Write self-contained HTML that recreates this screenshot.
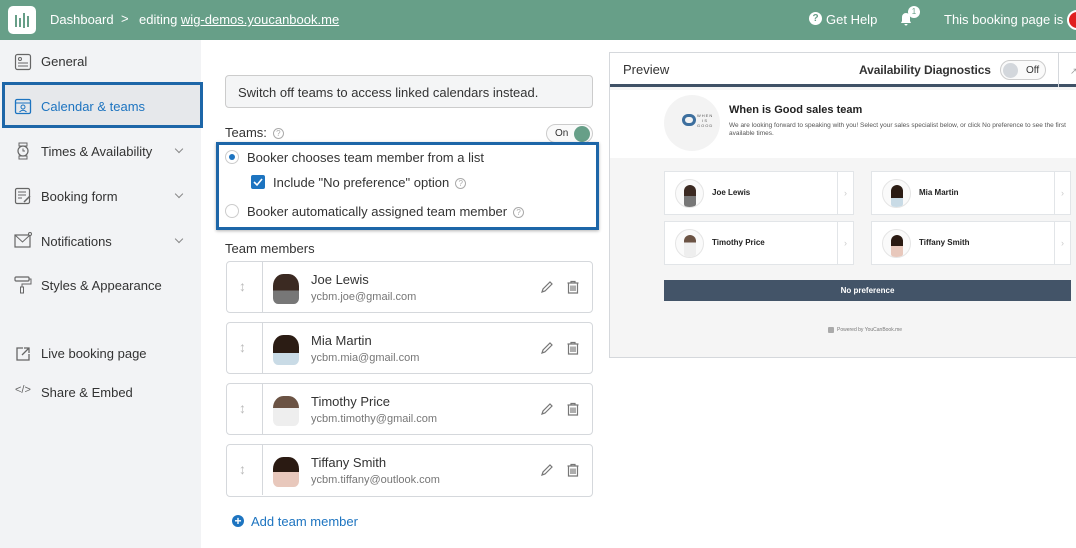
<!DOCTYPE html>
<html><head><meta charset="utf-8"><style>
*{margin:0;padding:0;box-sizing:border-box}
body{width:1076px;height:548px;overflow:hidden;background:#fff;font-family:"Liberation Sans",sans-serif;color:#333;position:relative}
.a{position:absolute}
.hdr{left:0;top:0;width:1076px;height:40px;background:#679f88;color:#fff;font-size:13px}
.side{left:0;top:40px;width:201px;height:508px;background:#f2f3f5}
.si{position:absolute;left:41px;font-size:13px;color:#333}
.ic{position:absolute;left:14px;width:18px;height:18px}
.chev{position:absolute;left:176px;width:6px;height:6px;border-right:1.2px solid #888;border-bottom:1.2px solid #888;transform:rotate(45deg)}
.card{position:absolute;left:226px;width:367px;height:52px;border:1px solid #d5d8dc;border-radius:4px;background:#fff}
.card .dv{position:absolute;left:35px;top:0;width:1px;height:50px;background:#d5d8dc}
.card .nm{position:absolute;left:84px;top:10px;font-size:13px;color:#333}
.card .em{position:absolute;left:84px;top:29px;font-size:11px;color:#777}
.av{position:absolute;left:46px;top:12px;width:26px;height:30px;border-radius:40% 40% 20% 20%}
.pc{position:absolute;border:1px solid #e2e5e8;background:#fff;height:44px}
.pc .circ{position:absolute;left:10px;top:7px;width:29px;height:29px;border-radius:50%;border:1px solid #e5e5e5;background:#fafafa;overflow:hidden}
.pc .circ i{position:absolute;left:8px;top:5px;width:12px;height:22px;border-radius:6px 6px 3px 3px}
.pc .n{position:absolute;left:47px;top:16px;font-size:8px;font-weight:bold;color:#222}
.pc .ad{position:absolute;right:0;top:0;width:16px;height:42px;border-left:1px solid #e2e5e8;color:#ccc;font-size:9px;text-align:center;line-height:42px}
.q{display:inline-block;width:11px;height:11px;border:1px solid #aaa;border-radius:50%;font-size:8px;color:#aaa;text-align:center;line-height:9px;vertical-align:1px;margin-left:6px}
</style></head><body>
<div class="a hdr">
 <div class="a" style="left:8px;top:6px;width:28px;height:28px;background:#fff;border-radius:5px">
  <svg width="28" height="28"><g stroke="#679f88" stroke-width="2"><line x1="8" y1="9" x2="8" y2="21"/><line x1="12" y1="12" x2="12" y2="21"/><line x1="16" y1="7" x2="16" y2="22"/><line x1="20" y1="10" x2="20" y2="21"/></g></svg>
 </div>
 <div class="a" style="left:50px;top:12px">Dashboard</div>
 <div class="a" style="left:121px;top:11px">&gt;</div>
 <div class="a" style="left:139px;top:12px">editing <u>wig-demos.youcanbook.me</u></div>
 <div class="a" style="left:809px;top:12px;width:13px;height:13px;border-radius:50%;background:#fff;color:#679f88;font-size:10px;font-weight:bold;text-align:center;line-height:13px">?</div>
 <div class="a" style="left:826px;top:12px">Get Help</div>
 <svg class="a" style="left:898px;top:11px" width="16" height="16"><path d="M3 12 L13 12 L12 10 L12 6 A4 4 0 0 0 4 6 L4 10 Z M6.5 13 A1.5 1.5 0 0 0 9.5 13Z" fill="#fff"/></svg>
 <div class="a" style="left:908px;top:6px;width:12px;height:12px;border-radius:50%;background:#fff;color:#679f88;font-size:8px;text-align:center;line-height:12px">1</div>
 <div class="a" style="left:944px;top:12px">This booking page is</div>
 <div class="a" style="left:1067px;top:10px;width:20px;height:20px;border-radius:50%;background:#e0201f;border:2px solid #fff"></div>
</div>

<div class="a side">
 <svg class="ic" style="top:13px" viewBox="0 0 18 18"><rect x="1.5" y="1.5" width="15" height="15" rx="2" fill="none" stroke="#666" stroke-width="1.2"/><circle cx="6" cy="6" r="1.5" fill="none" stroke="#666"/><line x1="4" y1="10" x2="14" y2="10" stroke="#666"/><line x1="4" y1="13" x2="14" y2="13" stroke="#666"/></svg>
 <div class="si" style="top:14px">General</div>
 <div class="a" style="left:2px;top:42px;width:201px;height:46px;background:#e6e8eb;border:3px solid #1d66a8"></div>
 <svg class="ic" style="top:57px" viewBox="0 0 18 18"><rect x="1.5" y="2.5" width="15" height="14" rx="1.5" fill="none" stroke="#1d74c0" stroke-width="1.3"/><line x1="1.5" y1="6" x2="16.5" y2="6" stroke="#1d74c0"/><circle cx="9" cy="10" r="2" fill="none" stroke="#1d74c0"/><path d="M5.5 15 Q9 11.5 12.5 15" fill="none" stroke="#1d74c0"/></svg>
 <div class="si" style="top:59px;color:#1d74c0">Calendar &amp; teams</div>
 <svg class="ic" style="top:102px" viewBox="0 0 18 18"><rect x="5" y="1" width="8" height="3" fill="none" stroke="#666"/><rect x="5" y="14" width="8" height="3" fill="none" stroke="#666"/><circle cx="9" cy="9" r="5" fill="none" stroke="#666" stroke-width="1.2"/><path d="M9 6.5 V9 H11" fill="none" stroke="#666"/></svg>
 <div class="si" style="top:104px">Times &amp; Availability</div><div class="chev" style="top:106px"></div>
 <svg class="ic" style="top:147px" viewBox="0 0 18 18"><rect x="1.5" y="1.5" width="14" height="15" rx="1.5" fill="none" stroke="#666" stroke-width="1.2"/><line x1="4" y1="5" x2="12" y2="5" stroke="#666"/><line x1="4" y1="8" x2="12" y2="8" stroke="#666"/><line x1="4" y1="11" x2="8" y2="11" stroke="#666"/><path d="M10 15 L16 9" stroke="#666" stroke-width="1.5"/></svg>
 <div class="si" style="top:149px">Booking form</div><div class="chev" style="top:151px"></div>
 <svg class="ic" style="top:192px" viewBox="0 0 18 18"><rect x="1" y="3" width="15" height="12" fill="none" stroke="#666" stroke-width="1.2"/><path d="M1 3 L8.5 10 L16 3" fill="none" stroke="#666"/><circle cx="16" cy="2" r="1.5" fill="#f2f3f5" stroke="#666"/></svg>
 <div class="si" style="top:194px">Notifications</div><div class="chev" style="top:196px"></div>
 <svg class="ic" style="top:236px" viewBox="0 0 18 18"><rect x="1" y="1" width="14" height="4" rx="1" fill="none" stroke="#666" stroke-width="1.2"/><path d="M15 3 H17 V8 H8 V11" fill="none" stroke="#666"/><rect x="6.5" y="11" width="3" height="6" fill="none" stroke="#666"/></svg>
 <div class="si" style="top:238px">Styles &amp; Appearance</div>
 <svg class="ic" style="top:305px" viewBox="0 0 18 18"><path d="M9 3 H3 V15 H15 V9" fill="none" stroke="#666" stroke-width="1.3"/><path d="M8 10 L15 3 M10 3 H15 V8" fill="none" stroke="#666" stroke-width="1.3"/></svg>
 <div class="si" style="top:306px">Live booking page</div>
 <div class="a" style="left:15px;top:344px;font-size:11px;color:#666">&lt;/&gt;</div>
 <div class="si" style="top:345px">Share &amp; Embed</div>
</div>

<div class="a" style="left:225px;top:75px;width:368px;height:33px;background:#f4f5f6;border:1px solid #ccc;border-radius:4px;font-size:13px;padding:9px 12px;color:#333">Switch off teams to access linked calendars instead.</div>
<div class="a" style="left:225px;top:125px;font-size:13px">Teams:<span class="q">?</span></div>
<div class="a" style="left:546px;top:124px;width:47px;height:19px;border:1px solid #ccc;border-radius:10px;background:#fafafa;font-size:10px;padding:3px 0 0 8px">On</div>
<div class="a" style="left:574px;top:126px;width:16px;height:16px;border-radius:50%;background:#679f88"></div>
<div class="a" style="left:216px;top:142px;width:383px;height:88px;border:3px solid #1d66a8;box-shadow:0 1px 3px rgba(0,0,0,.3)"></div>
<div class="a" style="left:225px;top:150px;width:14px;height:14px;border:1px solid #ccc;border-radius:50%;background:#fff"><div class="a" style="left:3px;top:3px;width:6px;height:6px;border-radius:50%;background:#1d74c0"></div></div>
<div class="a" style="left:247px;top:150px;font-size:13px">Booker chooses team member from a list</div>
<div class="a" style="left:251px;top:175px;width:14px;height:14px;background:#1d74c0;border-radius:2px"><svg width="14" height="14"><path d="M3 7 L6 10 L11 4" fill="none" stroke="#fff" stroke-width="1.6"/></svg></div>
<div class="a" style="left:273px;top:175px;font-size:13px">Include "No preference" option<span class="q">?</span></div>
<div class="a" style="left:225px;top:204px;width:14px;height:14px;border:1px solid #ccc;border-radius:50%;background:#fff"></div>
<div class="a" style="left:247px;top:204px;font-size:13px">Booker automatically assigned team member<span class="q">?</span></div>
<div class="a" style="left:225px;top:241px;font-size:13px">Team members</div>

<div class="card" style="top:261px"><div class="a" style="left:12px;top:16px;color:#bbb;font-size:14px">↕</div><div class="dv"></div><div class="av" style="background:linear-gradient(#3b2a22 0 55%,#777 55%)"></div><div class="nm">Joe Lewis</div><div class="em">ycbm.joe@gmail.com</div>
<svg class="a" style="left:313px;top:18px" width="14" height="14"><path d="M2 12 L3 9 L10 2 L12 4 L5 11 Z" fill="none" stroke="#777" stroke-width="1.2"/></svg><svg class="a" style="left:339px;top:18px" width="14" height="14"><path d="M1.5 3 H12.5 M5 3 V1.5 H9 V3 M2.5 3 V13 H11.5 V3 M5 5.5 V11 M7 5.5 V11 M9 5.5 V11" fill="none" stroke="#777" stroke-width="1.2"/></svg></div>
<div class="card" style="top:322px"><div class="a" style="left:12px;top:16px;color:#bbb;font-size:14px">↕</div><div class="dv"></div><div class="av" style="background:linear-gradient(#2b1c14 0 60%,#c9dbe6 60%)"></div><div class="nm">Mia Martin</div><div class="em">ycbm.mia@gmail.com</div>
<svg class="a" style="left:313px;top:18px" width="14" height="14"><path d="M2 12 L3 9 L10 2 L12 4 L5 11 Z" fill="none" stroke="#777" stroke-width="1.2"/></svg><svg class="a" style="left:339px;top:18px" width="14" height="14"><path d="M1.5 3 H12.5 M5 3 V1.5 H9 V3 M2.5 3 V13 H11.5 V3 M5 5.5 V11 M7 5.5 V11 M9 5.5 V11" fill="none" stroke="#777" stroke-width="1.2"/></svg></div>
<div class="card" style="top:383px"><div class="a" style="left:12px;top:16px;color:#bbb;font-size:14px">↕</div><div class="dv"></div><div class="av" style="background:linear-gradient(#6b5344 0 40%,#eee 40%)"></div><div class="nm">Timothy Price</div><div class="em">ycbm.timothy@gmail.com</div>
<svg class="a" style="left:313px;top:18px" width="14" height="14"><path d="M2 12 L3 9 L10 2 L12 4 L5 11 Z" fill="none" stroke="#777" stroke-width="1.2"/></svg><svg class="a" style="left:339px;top:18px" width="14" height="14"><path d="M1.5 3 H12.5 M5 3 V1.5 H9 V3 M2.5 3 V13 H11.5 V3 M5 5.5 V11 M7 5.5 V11 M9 5.5 V11" fill="none" stroke="#777" stroke-width="1.2"/></svg></div>
<div class="card" style="top:444px;height:53px"><div class="a" style="left:12px;top:16px;color:#bbb;font-size:14px">↕</div><div class="dv"></div><div class="av" style="background:linear-gradient(#2a1a12 0 50%,#e8c8bc 50%)"></div><div class="nm">Tiffany Smith</div><div class="em">ycbm.tiffany@outlook.com</div>
<svg class="a" style="left:313px;top:18px" width="14" height="14"><path d="M2 12 L3 9 L10 2 L12 4 L5 11 Z" fill="none" stroke="#777" stroke-width="1.2"/></svg><svg class="a" style="left:339px;top:18px" width="14" height="14"><path d="M1.5 3 H12.5 M5 3 V1.5 H9 V3 M2.5 3 V13 H11.5 V3 M5 5.5 V11 M7 5.5 V11 M9 5.5 V11" fill="none" stroke="#777" stroke-width="1.2"/></svg></div>
<div class="a" style="left:232px;top:515px;width:12px;height:12px;border-radius:50%;background:#1d74c0;color:#fff;font-size:12px;font-weight:bold;text-align:center;line-height:12px">+</div>
<div class="a" style="left:251px;top:514px;font-size:13px;color:#1d74c0">Add team member</div>

<div class="a" style="left:609px;top:52px;width:470px;height:306px;border:1px solid #d5d8dc;background:#f5f5f5;overflow:hidden">
 <div class="a" style="left:0;top:0;width:470px;height:34px;background:#fff;border-bottom:3px solid #3f5166"></div>
 <div class="a" style="left:13px;top:9px;font-size:13px">Preview</div>
 <div class="a" style="left:249px;top:10px;font-size:12px;font-weight:bold;color:#333;letter-spacing:-0.1px">Availability Diagnostics</div>
 <div class="a" style="left:390px;top:7px;width:46px;height:20px;border:1px solid #ccc;border-radius:10px;background:#fafafa;font-size:10px;padding:4px 0 0 25px">Off</div>
 <div class="a" style="left:393px;top:10px;width:15px;height:15px;border-radius:50%;background:#d3d7dc"></div>
 <div class="a" style="left:448px;top:0;width:1px;height:34px;background:#d5d8dc"></div>
 <div class="a" style="left:460px;top:13px;font-size:9px;color:#999">↗</div>
 <div class="a" style="left:0;top:37px;width:470px;height:68px;background:#fff"></div>
 <div class="a" style="left:54px;top:42px;width:56px;height:56px;border-radius:50%;background:#f3f3f3"></div>
 <div class="a" style="left:72px;top:61px;width:14px;height:12px;border:3px solid #3d6f9e;border-radius:6px"></div>
 <div class="a" style="left:87px;top:60px;font-size:4px;color:#555;letter-spacing:1px;line-height:5px;text-align:center">WHEN<br>IS<br>GOOD</div>
 <div class="a" style="left:119px;top:51px;font-size:11px;font-weight:bold;color:#222">When is Good sales team</div>
 <div class="a" style="left:119px;top:69px;width:345px;font-size:6.5px;color:#555;line-height:8px">We are looking forward to speaking with you! Select your sales specialist below, or click No preference to see the first available times.</div>
 <div class="pc" style="left:54px;top:118px;width:190px"><div class="circ"><i style="background:linear-gradient(#3b2a22 0 50%,#777 50%)"></i></div><div class="n">Joe Lewis</div><div class="ad">›</div></div>
 <div class="pc" style="left:261px;top:118px;width:200px"><div class="circ"><i style="background:linear-gradient(#2b1c14 0 60%,#c9dbe6 60%)"></i></div><div class="n">Mia Martin</div><div class="ad">›</div></div>
 <div class="pc" style="left:54px;top:168px;width:190px"><div class="circ"><i style="background:linear-gradient(#6b5344 0 35%,#eee 35%)"></i></div><div class="n">Timothy Price</div><div class="ad">›</div></div>
 <div class="pc" style="left:261px;top:168px;width:200px"><div class="circ"><i style="background:linear-gradient(#2a1a12 0 50%,#e8c8bc 50%)"></i></div><div class="n">Tiffany Smith</div><div class="ad">›</div></div>
 <div class="a" style="left:54px;top:227px;width:407px;height:21px;background:#435468;color:#fff;font-size:8px;font-weight:bold;text-align:center;line-height:21px">No preference</div>
 <div class="a" style="left:218px;top:274px;width:6px;height:6px;background:#aaa;border-radius:1px"></div>
 <div class="a" style="left:227px;top:274px;font-size:5px;color:#777">Powered by YouCanBook.me</div>
</div>
</body></html>
